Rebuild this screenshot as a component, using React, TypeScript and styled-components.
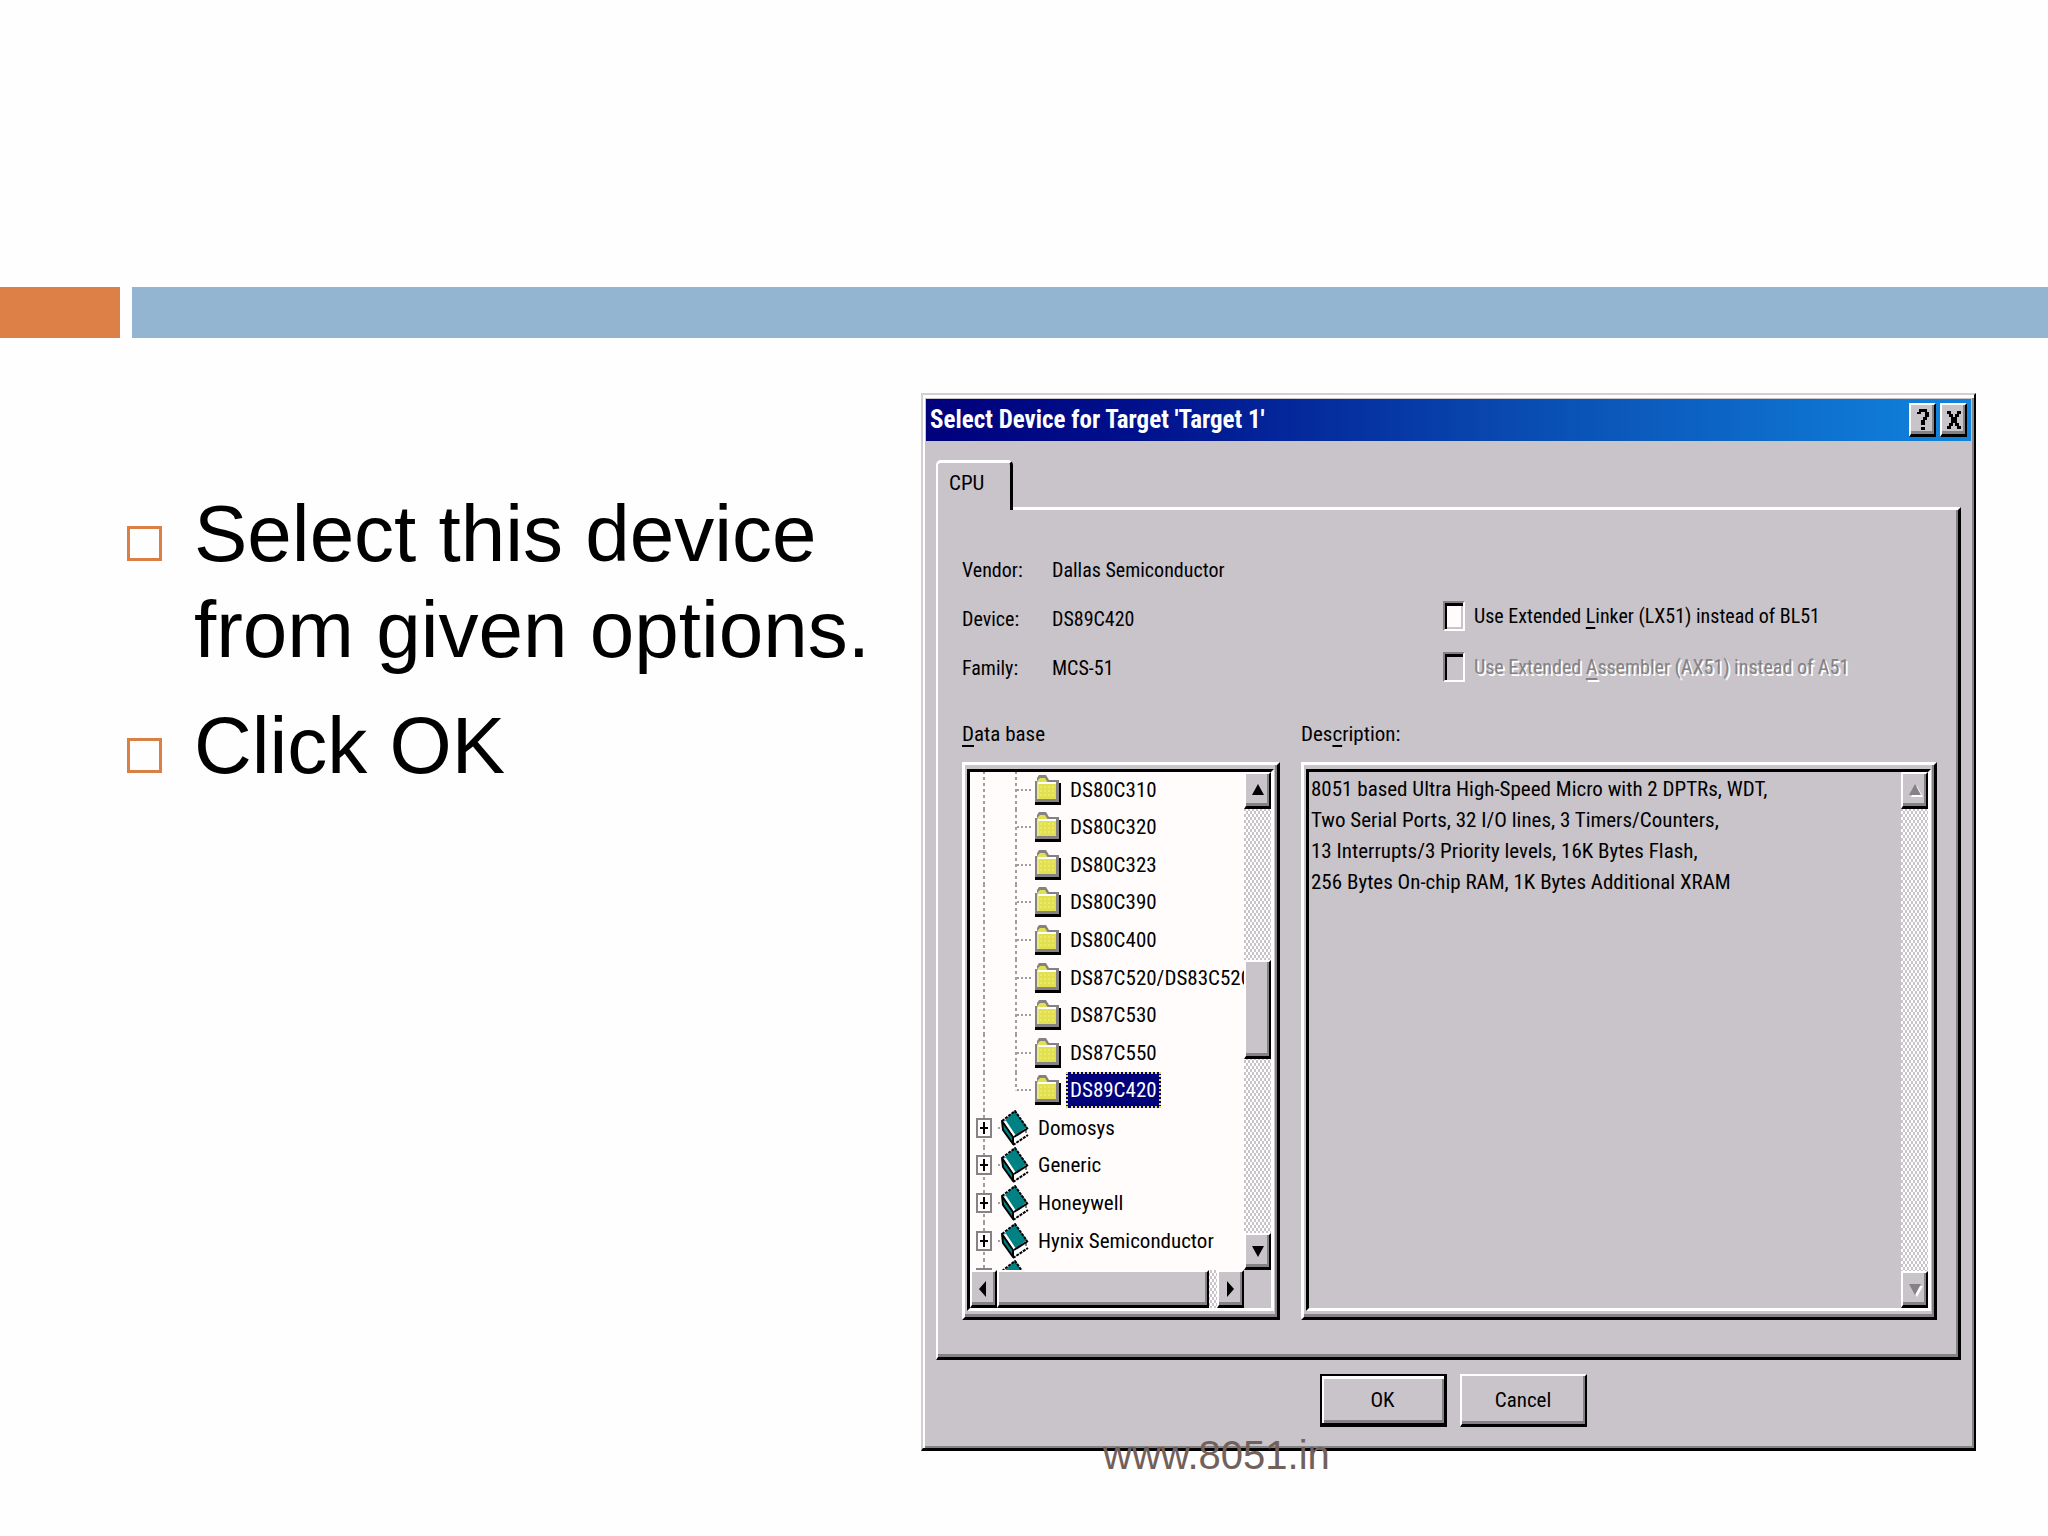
import React from "react";
import styled, { createGlobalStyle, css } from "styled-components";

const face = "#c8c4c9";
const shade = "#848284";
const navy = "#00007b";
const uiFont = `"Roboto Condensed", "Liberation Sans Narrow", "Liberation Sans", Arial, sans-serif`;

const GlobalStyle = createGlobalStyle`
  *, *::before, *::after { box-sizing: border-box; }
  body { margin: 0; background: #fefefe; color: #000; font-family: "Liberation Sans", Arial, sans-serif; }
  button, input, textarea { font: inherit; color: inherit; margin: 0; padding: 0; border-radius: 0; }
`;

/* ---------- slide ---------- */

const Slide = styled.main`
  padding-top: 287px;
  padding-bottom: 48px;
`;

const Band = styled.div`
  display: grid;
  grid-template-columns: 120px 1fr;
  gap: 12px;
  height: 51px;
`;

const BandPart = styled.div<{ $color: string }>`
  background: ${(p) => p.$color};
`;

const Columns = styled.div`
  display: grid;
  grid-template-columns: minmax(0, 921fr) minmax(0, 1055fr);
  align-items: start;
  padding: 55px 72px 0 0;
`;

const Points = styled.ul`
  display: flex;
  flex-direction: column;
  gap: 20px;
  list-style: none;
  margin: 0;
  padding: 93px 32px 0 127px;
  font-size: 80px;
  line-height: 96px;
`;

const Point = styled.li`
  display: flex;
  align-items: baseline;
  gap: 32px;

  &::before {
    content: "";
    flex: none;
    width: 35px;
    height: 35px;
    border: 3px solid #db8045;
  }
`;

const Figure = styled.div`
  position: relative;
`;

const Site = styled.footer`
  position: absolute;
  left: 182px;
  bottom: -27px;
  font-size: 40px;
  line-height: 46px;
  color: #72605b;
`;

/* ---------- dialog ---------- */

const Dialog = styled.section`
  padding: 4px 3px 21px;
  border: 2px solid #000;
  border-bottom-width: 3px;
  border-top-color: #d2ced2;
  border-left-color: #d2ced2;
  background: ${face};
  box-shadow: inset 2px 3px #fff, inset -2px -2px ${shade};
  font-family: ${uiFont};
  font-size: 21px;
  line-height: 30px;
`;

const TitleBar = styled.header`
  display: flex;
  align-items: center;
  gap: 4px;
  height: 42px;
  padding: 0 4px 0 4px;
  background: linear-gradient(90deg, ${navy} 0%, #00108c 20%, #0a50b4 60%, #1084de 100%);
  color: #fff;
`;

const Title = styled.h1`
  flex: 1;
  margin: 0;
  font-size: 25px;
  line-height: 30px;
`;

const raised = css`
  border: 2px solid #000;
  border-top-color: #fff;
  border-left-color: #fff;
  border-bottom-width: 3px;
  background: ${face};
  box-shadow: inset -2px -3px ${shade};
`;

const CaptionButton = styled.button`
  ${raised}
  display: grid;
  place-items: center;
  width: 27px;
  height: 34px;
`;

const Body = styled.div`
  padding: 19px 10px 0;
`;

const Tab = styled.button`
  display: block;
  position: relative;
  width: 77px;
  height: 50px;
  margin-bottom: -3px;
  padding: 0 0 7px 11px;
  border: 2px solid #fff;
  border-top-width: 3px;
  border-right: 3px solid #000;
  border-bottom: 0;
  border-radius: 5px 5px 0 0;
  background: ${face};
  text-align: left;
`;

const Panel = styled.div`
  padding: 35px 21px 37px 24px;
  border: 3px solid #000;
  border-top-color: #fff;
  border-left: 2px solid #fff;
  box-shadow: inset -2px -3px ${shade};
`;

const Info = styled.div`
  display: grid;
  grid-template-columns: 1fr 494px;
  font-size: 20px;
`;

const Facts = styled.dl`
  display: grid;
  grid-template-columns: 90px 1fr;
  grid-auto-rows: 49px;
  align-items: center;
  margin: 0;

  dd { margin: 0; }
`;

const Options = styled.div`
  display: flex;
  flex-direction: column;
  gap: 21px;
  padding-top: 56px;
`;

const Option = styled.label<{ $off?: boolean }>`
  display: flex;
  align-items: center;
  gap: 9px;
  height: 30px;
  white-space: nowrap;
  ${(p) => p.$off && css`color: ${shade}; text-shadow: 2px 2px #fff;`}
`;

const Tick = styled.input`
  appearance: none;
  flex: none;
  width: 22px;
  height: 30px;
  border: 2px solid ${shade};
  border-right-color: #fff;
  border-bottom-color: #fff;
  background: #fffcfb;
  box-shadow: inset 2px 3px #000, inset -2px -2px ${face};

  &:disabled { background: ${face}; }
`;

const Key = styled.u`
  text-underline-offset: 4px;
  text-decoration-thickness: 2px;
`;

const Lists = styled.div`
  display: grid;
  grid-template-columns: 318px 1fr;
  gap: 21px;
  padding-top: 27px;
`;

const Group = styled.div`
  display: flex;
  flex-direction: column;
  gap: 13px;
`;

const Caption = styled.label`
  display: block;
`;

const Frame = styled.div`
  padding: 4px 3px 6px 2px;
  border: 3px solid #000;
  border-top-color: #fff;
  border-left-color: #fff;
  box-shadow: inset -2px -3px ${shade};
`;

const Well = styled.div<{ $hasFoot?: boolean }>`
  display: grid;
  grid-template-columns: 1fr 27px;
  grid-template-rows: ${(p) => (p.$hasFoot ? "498px 38px" : "536px")};
  border: 3px solid #fff;
  border-top-color: #000;
  border-left-color: #000;
`;

/* ---------- scroll bars ---------- */

const Track = styled.div<{ $across?: boolean }>`
  display: flex;
  flex-direction: ${(p) => (p.$across ? "row" : "column")};
  background: repeating-conic-gradient(#fff 0 25%, ${face} 0 50%) 0 0 / 4px 6px;
`;

const Arrow = styled.button<{ $across?: boolean }>`
  ${raised}
  display: grid;
  place-items: center;
  flex: none;
  width: 27px;
  height: ${(p) => (p.$across ? "38px" : "37px")};
`;

const Gap = styled.div<{ $grow: number }>`
  flex: ${(p) => p.$grow} 1 0;
`;

const Thumb = styled.div<{ $grow: number }>`
  ${raised}
  flex: ${(p) => p.$grow} 1 0;
`;

/* ---------- device tree ---------- */

const dotsDown = `repeating-linear-gradient(180deg, #a09ca0 0 3px, transparent 3px 6px)`;
const dotsAcross = `repeating-linear-gradient(90deg, #a09ca0 0 2px, transparent 2px 4px)`;

const TreeView = styled.div`
  min-width: 0;
  overflow: hidden;
  background: #fffcfb;
`;

const Tree = styled.ul`
  display: grid;
  grid-auto-rows: 1fr;
  height: 526px;
  margin: -1px 0 0;
  padding: 0;
  list-style: none;
`;

const Row = styled.li`
  display: flex;
  align-items: center;
  white-space: nowrap;

  svg { flex: none; margin-right: 5px; }
`;

const Rail = styled.span`
  display: grid;
  place-items: center;
  flex: none;
  align-self: stretch;
  width: 28px;
  background: ${dotsDown} 13px 0 / 2px 100% no-repeat;
`;

const Branch = styled.span<{ $last?: boolean }>`
  flex: none;
  align-self: stretch;
  width: 37px;
  background:
    ${dotsDown} 17px 0 / 2px ${(p) => (p.$last ? "50%" : "100%")} no-repeat,
    ${dotsAcross} 19px 50% / 16px 2px no-repeat;
`;

const Stub = styled.span`
  flex: none;
  align-self: stretch;
  width: 3px;
  background: ${dotsAcross} 0 50% / 3px 2px no-repeat;
`;

const Expander = styled.button`
  display: grid;
  place-items: center;
  width: 16px;
  height: 20px;
  border: 2px solid ${shade};
  background: #fffcfb;

  svg { margin: 0; }
`;

const Name = styled.span<{ $selected?: boolean }>`
  padding: 3px 4px;
  ${(p) =>
    p.$selected &&
    css`
      background: ${navy};
      color: #fff;
      outline: 2px dotted #e8e070;
      outline-offset: -2px;
    `}
`;

const Description = styled.textarea`
  display: block;
  width: 100%;
  height: 100%;
  padding: 2px;
  border: 0;
  outline: 0;
  resize: none;
  overflow: hidden;
  background: ${face};
  line-height: 31px;
`;

const Actions = styled.div`
  display: flex;
  justify-content: center;
  gap: 13px;
  padding: 14px 0 0 9px;
`;

const Action = styled.button<{ $primary?: boolean }>`
  ${raised}
  width: 127px;
  height: 53px;
  ${(p) =>
    p.$primary &&
    css`
      border: 2px solid #000;
      border-bottom-width: 4px;
      border-right-width: 3px;
      box-shadow: inset 2px 3px #fff, inset -2px -3px ${shade};
    `}
`;

/* ---------- drawings ---------- */

const shapes = { up: "M7 1 13 12H1z", down: "M1 2H13L7 13z", left: "M10 0V16L3 8z", right: "M4 0V16L11 8z" };

function Pointer({ to, off }: { to: keyof typeof shapes; off?: boolean }) {
  const across = to === "left" || to === "right";
  return (
    <svg width="16" height="18" viewBox="0 0 16 18" aria-hidden="true">
      {off && <path d={shapes[to]} fill="#fff" transform="translate(3 4)" />}
      <path d={shapes[to]} fill={off ? shade : "#000"} transform={across ? "translate(0 1)" : "translate(1 2)"} />
    </svg>
  );
}

function Folder() {
  return (
    <svg width="26" height="30" viewBox="0 0 26 30" aria-hidden="true">
      <path d="M2 8H26V30H0V27H2z" fill="#000" />
      <path d="M0 6H2V3L4 0H11L14 5H24V27H0z" fill="#848284" />
      <path d="M2 7V24H21V8H13L10 3H5L3 5z" fill="#e2e04e" />
      <path d="M3 8H21" stroke="#fff" strokeWidth="2" />
      <path d="M3 8V24" stroke="#f6f4b0" strokeWidth="1" />
      <path d="M5 12H21M5 16H21M5 20H21" stroke="#f2f088" strokeWidth="1" strokeDasharray="2 2" />
    </svg>
  );
}

function Book() {
  return (
    <svg width="28" height="36" viewBox="0 0 28 36" aria-hidden="true">
      <path d="M12 27 26 17 27 24 13 35z" fill="#fff" />
      <path d="M1 11 12 27V34L2 20z" fill="#008284" stroke="#000" strokeWidth="2" strokeLinejoin="round" />
      <path d="M14 1 26 17 14 26 3 11z" fill="#008284" />
      <path d="M1 11 14 1 26 18" fill="none" stroke="#000" strokeWidth="2" strokeDasharray="3 1" />
      <path d="M4 11 14 26" fill="none" stroke="#fff" strokeWidth="2" />
      <path d="M13 27 27 18" fill="none" stroke="#000" strokeWidth="2" />
      <path d="M12 35 27 25" fill="none" stroke="#000" strokeWidth="2" strokeDasharray="3 1" />
      <path d="M25 19V23" fill="none" stroke="#000" strokeWidth="1" />
    </svg>
  );
}

function Plus() {
  return (
    <svg width="8" height="12" viewBox="0 0 8 12" aria-hidden="true">
      <path d="M3 0H5V5H8V7H5V12H3V7H0V5H3z" fill="#000" />
    </svg>
  );
}

function Pixels({ rows, width, height }: { rows: string[]; width: number; height: number }) {
  const d = rows
    .flatMap((row, y) => [...row].map((c, x) => (c === "#" ? `M${x} ${y}h1v1h-1z` : "")))
    .join("");
  return (
    <svg
      width={width}
      height={height}
      viewBox={`0 0 ${rows[0].length} ${rows.length}`}
      preserveAspectRatio="none"
      shapeRendering="crispEdges"
      aria-hidden="true"
    >
      <path d={d} />
    </svg>
  );
}

const helpMark = [".####.", "##..##", "....##", "...##.", "..##..", "..##..", "......", "..##.."];
const closeMark = ["##...##", ".##.##.", "..###..", "..###..", ".##.##.", "##...##"];

/* ---------- content ---------- */

const devices = [
  "DS80C310",
  "DS80C320",
  "DS80C323",
  "DS80C390",
  "DS80C400",
  "DS87C520/DS83C520",
  "DS87C530",
  "DS87C550",
  "DS89C420",
];
const vendors = ["Domosys", "Generic", "Honeywell", "Hynix Semiconductor", "Hyundai"];
const facts = [
  ["Vendor:", "Dallas Semiconductor"],
  ["Device:", "DS89C420"],
  ["Family:", "MCS-51"],
];
const description = [
  "8051 based Ultra High-Speed Micro with 2 DPTRs, WDT,",
  "Two Serial Ports, 32 I/O lines, 3 Timers/Counters,",
  "13 Interrupts/3 Priority levels, 16K Bytes Flash,",
  "256 Bytes On-chip RAM, 1K Bytes Additional XRAM",
].join("\n");

function DeviceTree() {
  return (
    <TreeView>
      <Tree role="tree" aria-labelledby="database-caption">
        {devices.map((name, i) => {
          const last = i === devices.length - 1;
          return (
            <Row key={name} role="treeitem" aria-selected={last}>
              <Rail />
              <Branch $last={last} />
              <Folder />
              <Name $selected={last}>{name}</Name>
            </Row>
          );
        })}
        {vendors.map((name) => (
          <Row key={name} role="treeitem" aria-expanded={false}>
            <Rail>
              <Expander aria-label={`Expand ${name}`}>
                <Plus />
              </Expander>
            </Rail>
            <Stub />
            <Book />
            <Name>{name}</Name>
          </Row>
        ))}
      </Tree>
    </TreeView>
  );
}

function SelectDevice() {
  return (
    <Dialog role="dialog" aria-labelledby="dialog-title">
      <TitleBar>
        <Title id="dialog-title">Select Device for Target 'Target 1'</Title>
        <CaptionButton aria-label="Help">
          <Pixels rows={helpMark} width={12} height={21} />
        </CaptionButton>
        <CaptionButton aria-label="Close">
          <Pixels rows={closeMark} width={14} height={18} />
        </CaptionButton>
      </TitleBar>
      <Body>
        <Tab role="tab" aria-selected="true">
          CPU
        </Tab>
        <Panel role="tabpanel">
          <Info>
            <Facts>
              {facts.map(([term, value]) => (
                <React.Fragment key={term}>
                  <dt>{term}</dt>
                  <dd>{value}</dd>
                </React.Fragment>
              ))}
            </Facts>
            <Options>
              <Option>
                <Tick type="checkbox" />
                <span>
                  Use Extended <Key>L</Key>inker (LX51) instead of BL51
                </span>
              </Option>
              <Option $off>
                <Tick type="checkbox" disabled />
                <span>
                  Use Extended <Key>A</Key>ssembler (AX51) instead of A51
                </span>
              </Option>
            </Options>
          </Info>
          <Lists>
            <Group>
              <Caption as="div" id="database-caption">
                <Key>D</Key>ata base
              </Caption>
              <Frame>
                <Well $hasFoot>
                  <DeviceTree />
                  <Track>
                    <Arrow aria-label="Scroll up">
                      <Pointer to="up" />
                    </Arrow>
                    <Gap $grow={153} />
                    <Thumb $grow={95} />
                    <Gap $grow={176} />
                    <Arrow aria-label="Scroll down">
                      <Pointer to="down" />
                    </Arrow>
                  </Track>
                  <Track $across>
                    <Arrow $across aria-label="Scroll left">
                      <Pointer to="left" />
                    </Arrow>
                    <Thumb $grow={212} />
                    <Gap $grow={8} />
                    <Arrow $across aria-label="Scroll right">
                      <Pointer to="right" />
                    </Arrow>
                  </Track>
                </Well>
              </Frame>
            </Group>
            <Group>
              <Caption htmlFor="description">
                Des<Key>c</Key>ription:
              </Caption>
              <Frame>
                <Well>
                  <Description id="description" readOnly value={description} />
                  <Track>
                    <Arrow aria-label="Scroll description up" disabled>
                      <Pointer to="up" off />
                    </Arrow>
                    <Gap $grow={1} />
                    <Arrow aria-label="Scroll description down" disabled>
                      <Pointer to="down" off />
                    </Arrow>
                  </Track>
                </Well>
              </Frame>
            </Group>
          </Lists>
        </Panel>
        <Actions>
          <Action $primary>OK</Action>
          <Action>Cancel</Action>
        </Actions>
      </Body>
    </Dialog>
  );
}

export default function App() {
  return (
    <>
      <GlobalStyle />
      <Slide>
        <Band>
          <BandPart $color="#dd8047" />
          <BandPart $color="#94b5d1" />
        </Band>
        <Columns>
          <Points>
            <Point>Select this device from given options.</Point>
            <Point>Click OK</Point>
          </Points>
          <Figure>
            <SelectDevice />
            <Site>www.8051.in</Site>
          </Figure>
        </Columns>
      </Slide>
    </>
  );
}
